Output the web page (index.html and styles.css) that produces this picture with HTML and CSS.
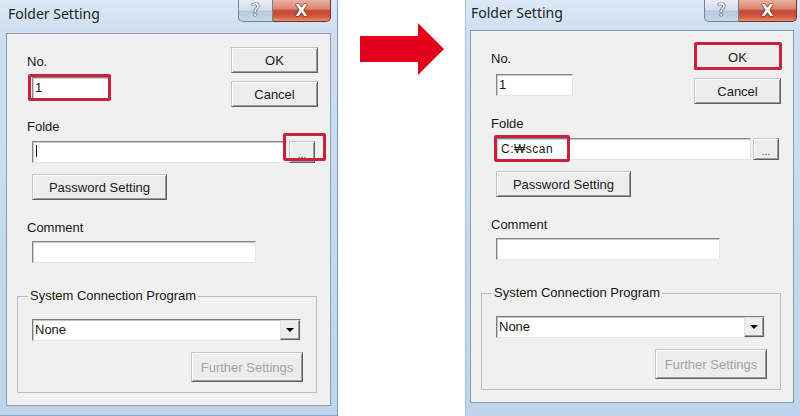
FILE: index.html
```html
<!DOCTYPE html>
<html lang="en">
<head>
    <meta charset="UTF-8">
    <meta name="viewport" content="width=device-width, initial-scale=1.0">
    <title>Folder Setting</title>
    <link rel="stylesheet" href="styles.css">
</head>
<body>
    <div class="shot">
        <!-- Before: empty folder -->
        <section class="dialog dialog-left">
            <div class="titlebar">
                <span class="title">Folder Setting</span>
                <div class="caption">
                    <span class="cap-help">?</span>
                    <span class="cap-close">X</span>
                </div>
            </div>
            <div class="client">
                <div class="head">
                    <div class="fields">
                        <div class="lbl">No.</div>
                        <div class="edit edit-no hl-no">1</div>
                    </div>
                    <div class="actions">
                        <button class="btn btn-main">OK</button>
                        <button class="btn btn-main">Cancel</button>
                    </div>
                </div>
                <div class="lbl lbl-folder">Folde</div>
                <div class="folder-row">
                    <div class="edit edit-folder"><span class="caret"></span></div>
                    <span class="mark">
                        <button class="btn btn-browse">...</button>
                        <span class="hl hl-browse"></span>
                    </span>
                </div>
                <button class="btn btn-password">Password Setting</button>
                <div class="lbl lbl-comment">Comment</div>
                <div class="edit edit-comment"></div>
                <fieldset class="group">
                    <legend>System Connection Program</legend>
                    <div class="combo">
                        <span class="combo-value">None</span>
                        <span class="combo-drop"></span>
                    </div>
                    <div class="group-foot">
                        <button class="btn btn-further" disabled>Further Settings</button>
                    </div>
                </fieldset>
            </div>
        </section>

        <div class="between">
            <svg class="arrow" width="84" height="52" viewBox="0 0 84 52">
                <polygon points="0,13 58,13 58,0 84,26 58,52 58,39 0,39" fill="#e2001b"/>
            </svg>
        </div>

        <!-- After: folder chosen -->
        <section class="dialog dialog-right">
            <div class="titlebar">
                <span class="title">Folder Setting</span>
                <div class="caption">
                    <span class="cap-help">?</span>
                    <span class="cap-close">X</span>
                </div>
            </div>
            <div class="client">
                <div class="head">
                    <div class="fields">
                        <div class="lbl">No.</div>
                        <div class="edit edit-no">1</div>
                    </div>
                    <div class="actions">
                        <span class="mark">
                            <button class="btn btn-main">OK</button>
                            <span class="hl hl-ok"></span>
                        </span>
                        <button class="btn btn-main">Cancel</button>
                    </div>
                </div>
                <div class="lbl lbl-folder">Folde</div>
                <div class="folder-row">
                    <div class="edit edit-folder hl-path"><span class="path">C:₩scan</span></div>
                    <button class="btn btn-browse">...</button>
                </div>
                <button class="btn btn-password">Password Setting</button>
                <div class="lbl lbl-comment">Comment</div>
                <div class="edit edit-comment"></div>
                <fieldset class="group">
                    <legend>System Connection Program</legend>
                    <div class="combo">
                        <span class="combo-value">None</span>
                        <span class="combo-drop"></span>
                    </div>
                    <div class="group-foot">
                        <button class="btn btn-further" disabled>Further Settings</button>
                    </div>
                </fieldset>
            </div>
        </section>
    </div>
</body>
</html>
```

FILE: styles.css
```css
* {
    box-sizing: border-box;
}
body {
    margin: 0;
    background-color: #fff;
    font-family: "Liberation Sans", Arial, sans-serif;
    font-size: 13px;
    color: #161616;
}
.shot {
    display: flex;
    width: 800px;
    height: 416px;
    overflow: hidden;
}

/* window frame */
.dialog {
    flex: none;
    height: 416px;
    background: linear-gradient(to bottom, #dce8f5 0, #cfdff1 32px, #bed5ed 100%);
}
.dialog-left {
    width: 338px;
    padding: 0 7px 0 6px;
    box-shadow: inset -1px 0 #7f9cc0, inset 0 -1px #8aa6c8;
}
.dialog-right {
    width: 335px;
    padding: 0 6px 0 4px;
    border-left: 1px solid #a9c1dd;
}
.titlebar {
    height: 33px;
    display: flex;
    justify-content: space-between;
    align-items: flex-start;
}
.dialog-right .titlebar {
    height: 30px;
}
.title {
    font-family: "Noto Sans", "Open Sans", sans-serif;
    font-size: 14px;
    line-height: 18px;
    margin-top: 5px;
    padding-left: 2px;
    color: #1e1e1e;
}
.dialog-right .title {
    margin-top: 4px;
    padding-left: 1px;
}
.caption {
    display: flex;
    height: 22px;
}
.dialog-right .caption {
    margin-right: -3px;
}
.cap-help,
.cap-close {
    display: block;
    text-align: center;
    font-family: "DejaVu Sans", sans-serif;
    font-weight: bold;
    color: #fff;
    line-height: 21px;
}
.cap-help {
    width: 35px;
    border: 1px solid #70839c;
    border-top: none;
    border-radius: 0 0 0 5px;
    background: linear-gradient(to bottom, #e9eff7 0, #d3dde9 48%, #b8c7d9 52%, #cad7e6 100%);
    font-size: 17px;
    font-weight: normal;
    text-shadow: 0 0 1px #3d4d63, 0 0 1px #3d4d63, 0 0 1px #3d4d63, 0 0 1px #3d4d63;
}
.cap-close {
    width: 58px;
    border: 1px solid #7e2c21;
    border-left: none;
    border-top: none;
    border-radius: 0 0 5px 0;
    background: linear-gradient(to bottom, #eab0a2 0, #d98670 42%, #c4452f 52%, #cf5a40 78%, #e1906f 100%);
    font-size: 16px;
    text-shadow: 0 0 1px #5b1710, 0 0 1px #5b1710, 0 0 1px #5b1710, 0 0 1px #5b1710;
}

/* client area */
.client {
    height: 373px;
    background-color: #f0f0f0;
    border: 1px solid #8e9bab;
    padding: 13px 12px 0 20px;
}
.lbl {
    line-height: 14px;
}
.head {
    display: flex;
    justify-content: space-between;
}
.head .lbl {
    margin-top: 8px;
}
.actions {
    display: flex;
    flex-direction: column;
    gap: 8px;
}
.lbl-folder {
    margin-top: 13px;
}
.lbl-comment {
    margin-top: 21px;
}

/* edit boxes */
.edit {
    position: relative;
    height: 22px;
    margin-left: 5px;
    background-color: #fff;
    border: 1px solid;
    border-color: #868686 #e6e6e6 #e6e6e6 #868686;
    box-shadow: inset 1px 1px #c9c9c9;
    padding-left: 2px;
    line-height: 20px;
}
.edit-no {
    width: 77px;
    margin-top: 8px;
}
.folder-row {
    display: flex;
    gap: 2px;
    margin-top: 7px;
}
.edit-folder {
    width: 255px;
}
.edit-comment {
    width: 224px;
    margin-top: 6px;
}
.caret {
    display: inline-block;
    width: 1px;
    height: 12px;
    margin: 3px 0 0 1px;
    background-color: #000;
    vertical-align: top;
}
.path {
    font-family: "Liberation Sans", "DejaVu Sans", sans-serif;
    font-size: 12px;
    letter-spacing: 0.5px;
    padding-left: 2px;
}

/* buttons */
.btn {
    display: block;
    font-family: "Liberation Sans", Arial, sans-serif;
    font-size: 13px;
    color: #1a1a1a;
    background-color: #ededed;
    border: 1px solid;
    border-color: #c4c4c4 #5f5f5f #5f5f5f #c4c4c4;
    box-shadow: inset 1px 1px #fff, inset -1px -1px #9c9c9c;
    padding: 0;
}
.btn-main {
    width: 87px;
    height: 26px;
}
.btn-browse {
    width: 26px;
    height: 22px;
    font-size: 10px;
    line-height: 10px;
    padding-top: 5px;
    color: #444;
}
.btn-password {
    width: 135px;
    height: 26px;
    margin: 11px 0 0 5px;
}
.btn-further {
    width: 112px;
    height: 30px;
    color: #a3a3a3;
}

/* group box */
.group {
    width: 300px;
    margin: 26px 0 0 -10px;
    padding: 0 13px 10px 14px;
    border: 1px solid #bdbdbd;
    min-width: 0;
}
.group legend {
    margin-left: -4px;
    padding: 0 2px;
    line-height: 14px;
}
.combo {
    display: flex;
    height: 22px;
    margin: 16px 2px 0 0;
    background-color: #fff;
    border: 1px solid;
    border-color: #7c7c7c #e6e6e6 #e6e6e6 #7c7c7c;
    box-shadow: inset 1px 1px #c4c4c4;
}
.combo-value {
    flex: 1;
    padding-left: 2px;
    line-height: 20px;
}
.combo-drop {
    position: relative;
    width: 20px;
    height: 20px;
    background-color: #ededed;
    border: 1px solid;
    border-color: #e0e0e0 #5f5f5f #5f5f5f #e0e0e0;
    box-shadow: inset -1px -1px #a0a0a0;
}
.combo-drop::after {
    content: '';
    position: absolute;
    left: 5px;
    top: 7px;
    border-left: 4px solid transparent;
    border-right: 4px solid transparent;
    border-top: 4px solid #000;
}
.group-foot {
    display: flex;
    justify-content: flex-end;
    margin-top: 11px;
}

/* red highlight marks */
.mark {
    position: relative;
    display: block;
}
.hl,
.hl-no::after,
.hl-path::after {
    content: '';
    position: absolute;
    border: 3px solid #c9233b;
    border-radius: 2px;
}
.hl-no::after {
    top: -4px;
    left: -5px;
    right: -3px;
    bottom: -3px;
}
.hl-browse {
    top: -8px;
    left: -6px;
    width: 43px;
    height: 28px;
}
.hl-ok {
    top: -2px;
    left: 0;
    right: -1px;
    bottom: 0;
}
.hl-path::after {
    top: -4px;
    left: -3px;
    width: 70px;
    bottom: -3px;
}

/* arrow between the two dialogs */
.between {
    flex: none;
    width: 127px;
}
.arrow {
    display: block;
    margin: 23px 0 0 22px;
}
```
